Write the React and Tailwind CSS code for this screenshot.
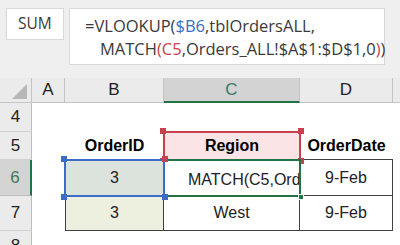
const BLUE = 'bg-[#3d6cc7]'
const RED = 'bg-[#c8414f]'

function Corner({ pos, color }) {
  const p = {
    tl: '-left-[4px] -top-[4px]',
    tr: '-right-[4px] -top-[4px]',
    bl: '-left-[4px] -bottom-[4px]',
    br: '-right-[4px] -bottom-[4px]',
  }[pos]
  return <div className={`absolute w-[6px] h-[6px] ${p} ${color}`} />
}

function RowHead({ n, selected }) {
  return (
    <div
      className={`flex items-center justify-center text-[17px] border-b ${
        selected
          ? 'bg-[#d4d4d4] text-[#3f7a55] border-b-[#bdbdbd] border-r-2 border-r-[#217346]'
          : 'bg-[#ebebeb] text-[#222] border-b-[#d2d2d2] border-r border-r-[#bdbdbd]'
      }`}
    >
      {n}
    </div>
  )
}

function ColHead({ label, selected }) {
  return (
    <div
      className={`flex items-center justify-center text-[17px] border-r border-r-[#c4c4c4] ${
        selected
          ? 'bg-[#d3d3d3] text-[#3d7a62] border-b-2 border-b-[#217346]'
          : 'bg-[#ebebeb] text-[#222] border-b border-b-[#c4c4c4]'
      }`}
    >
      {label}
    </div>
  )
}

export default function App() {
  return (
    <div className="w-[400px] h-[245px] overflow-hidden bg-white font-['Liberation_Sans',Arial,sans-serif]">
      {/* formula bar */}
      <div className="h-[78px] bg-[#efefef] flex items-start gap-[5px] pt-[8px] pl-[6px] font-['Open_Sans',sans-serif] text-[#3a3a3a]">
        <div className="w-[58px] h-[32px] bg-white border border-[#d9d9d9] flex items-center pl-[11px] text-[15.5px]">
          SUM
        </div>
        <div className="w-[316px] h-[57px] bg-white border border-[#d9d9d9] pt-[5px] text-[16.5px] leading-[23px] whitespace-nowrap">
          <div className="pl-[15px]">
            =VLOOKUP(<span className="text-[#3d6cc7]">$B6</span>,tblOrdersALL,
          </div>
          <div className="pl-[30px]">
            MATCH<span className="text-[#c8414f]">(C5</span>,Orders_ALL!$A$1:$D$1,0<span className="text-[#c8414f]">)</span>)
          </div>
        </div>
      </div>

      {/* sheet */}
      <div className="grid grid-cols-[32px_33px_99px_136px_93px_1fr] grid-rows-[25px_29px_28px_36px_35px_30px]">
        {/* header row */}
        <div className="relative bg-[#ebebeb] border-r border-b border-[#c4c4c4]">
          <div className="absolute right-[4px] bottom-[3px] w-0 h-0 border-l-[15px] border-l-transparent border-b-[15px] border-b-[#b7b7b7]" />
        </div>
        <ColHead label="A" />
        <ColHead label="B" />
        <ColHead label="C" selected />
        <ColHead label="D" />
        <div className="bg-[#ebebeb] border-b border-b-[#c4c4c4]" />

        {/* row 4 */}
        <RowHead n="4" />
        <div />
        <div />
        <div />
        <div />
        <div />

        {/* row 5 */}
        <RowHead n="5" />
        <div />
        <div className="flex items-center justify-center text-[16px] font-bold text-black">OrderID</div>
        <div className="relative z-10 flex items-center justify-center text-[16px] font-bold text-black bg-[#fbe4e5]">
          Region
          <div className="absolute -left-px -top-px -right-px -bottom-px border-2 border-[#c8414f]" />
          <Corner pos="tl" color={RED} />
          <Corner pos="tr" color={RED} />
          <Corner pos="bl" color={RED} />
          <Corner pos="br" color={RED} />
        </div>
        <div className="flex items-center justify-center text-[16px] font-bold text-black border-b border-[#404040]">
          OrderDate
        </div>
        <div />

        {/* row 6 */}
        <RowHead n="6" selected />
        <div />
        <div className="relative z-30 flex items-center justify-center text-[16px] text-[#222] bg-[#dce3dc]">
          3
          <div className="absolute -left-px -top-px -right-px -bottom-px border-2 border-[#3d6cc7]" />
          <Corner pos="tl" color={BLUE} />
          <Corner pos="tr" color={RED} />
          <Corner pos="bl" color={BLUE} />
          <Corner pos="br" color={BLUE} />
        </div>
        <div className="relative z-20 bg-white overflow-visible">
          <div className="h-full overflow-hidden flex items-end pb-[4px] pl-[24px] text-[16px] text-[#222] whitespace-nowrap">
            MATCH(C5,Orders_ALL!$A$1:$D$1,0))
          </div>
          <div className="absolute -left-px -top-px -right-px -bottom-px border-2 border-[#217346]" />
          <div className="absolute -right-[4px] -bottom-[4px] w-[6px] h-[6px] bg-[#217346] border border-white" />
        </div>
        <div className="flex items-center justify-center text-[16px] text-[#222] border-r border-b border-[#404040]">
          9-Feb
        </div>
        <div />

        {/* row 7 */}
        <RowHead n="7" />
        <div />
        <div className="flex items-center justify-center text-[16px] text-[#222] bg-[#eef0df] border-l border-r border-b border-[#404040]">
          3
        </div>
        <div className="flex items-center justify-center text-[16px] text-[#222] border-r border-b border-[#404040]">
          West
        </div>
        <div className="flex items-center justify-center text-[16px] text-[#222] border-r border-b border-[#404040]">
          9-Feb
        </div>
        <div />

        {/* row 8 */}
        <RowHead n="8" />
        <div />
        <div />
        <div />
        <div />
        <div />
      </div>
    </div>
  )
}
